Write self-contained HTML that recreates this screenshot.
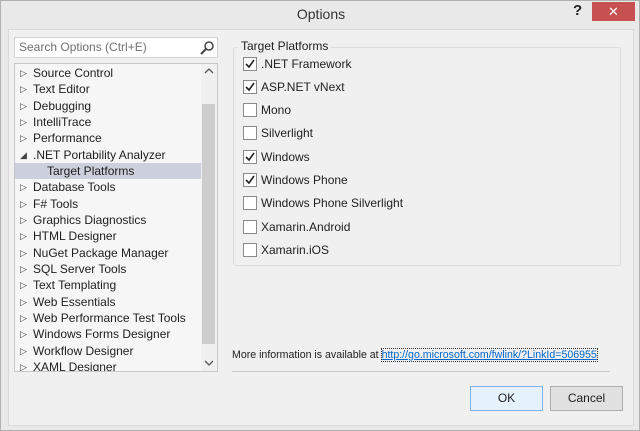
<!DOCTYPE html><html><head><style>
*{margin:0;padding:0;box-sizing:border-box}
body{width:640px;height:431px;overflow:hidden;background:#c9c9c9;font-family:"Liberation Sans",sans-serif;font-size:12px;color:#1e1e1e;position:relative}
.win{position:absolute;left:0;top:0;width:640px;height:431px;background:#e9e9e9;border:1px solid #b0b0b0}
.title{position:absolute;left:0;top:5px;width:640px;text-align:center;font-size:14px;color:#333}
.close{position:absolute;left:591px;top:1px;width:43px;height:19px;background:#c75050;color:#fff;text-align:center;font-size:13px;line-height:19px}
.help{position:absolute;left:572px;top:1px;font-size:15px;font-weight:bold;color:#222}
.inner{position:absolute;left:7px;top:28px;width:626px;height:397px;background:#f0f0f0;border:1px solid #d9d9d9}
.abs{position:absolute}
.search{left:13px;top:36px;width:204px;height:21px;background:#fff;border:1px solid #d4d4d4;color:#707070;padding:2px 4px;font-size:12px}
.tree{left:13px;top:62px;width:204px;height:309px;background:#f6f6f6;border:1px solid #c8c8c8;overflow:hidden}
.row{position:absolute;left:0;width:186px;height:16px;line-height:16px;padding-left:18px;white-space:nowrap}
.row .a{position:absolute;left:5px;top:0;font-size:9px;color:#444}
.sel{background:#ccd0dc}
.sb{position:absolute;left:186px;top:0;width:16px;height:307px;background:#f0f0f0}
.thumb{position:absolute;left:1px;top:40px;width:13px;height:240px;background:#cdcdcd}
.grp{left:232px;top:46px;width:388px;height:219px;border:1px solid #dcdcdc;border-radius:3px}
.legend{left:237px;top:38px;background:#f0f0f0;padding:0 3px}
.cb{position:absolute;left:242px;width:14px;height:14px;border:1px solid #8a8a8a;background:#fff}
.cbl{position:absolute;left:260px}
.btn{top:385px;width:73px;height:25px;background:#e1e1e1;border:1px solid #adadad;text-align:center;line-height:23px}
</style></head><body>
<div class="win">
<div class="title">Options</div>
<div class="help">?</div>
<div class="close">✕</div>
<div class="inner"></div>
<div class="abs search">Search Options (Ctrl+E)<svg style="position:absolute;right:3px;top:3px" width="14" height="14"><circle cx="9" cy="5" r="4" fill="none" stroke="#444" stroke-width="1.5"/><line x1="6" y1="8" x2="1" y2="13" stroke="#444" stroke-width="2"/></svg></div>
<div class="abs tree">
<div class="row" style="top:1px"><span class="a">▷</span>Source Control</div>
<div class="row" style="top:17px"><span class="a">▷</span>Text Editor</div>
<div class="row" style="top:34px"><span class="a">▷</span>Debugging</div>
<div class="row" style="top:50px"><span class="a">▷</span>IntelliTrace</div>
<div class="row" style="top:66px"><span class="a">▷</span>Performance</div>
<div class="row" style="top:83px"><span class="a">◢</span>.NET Portability Analyzer</div>
<div class="row sel" style="top:99px;padding-left:32px">Target Platforms</div>
<div class="row" style="top:115px"><span class="a">▷</span>Database Tools</div>
<div class="row" style="top:132px"><span class="a">▷</span>F# Tools</div>
<div class="row" style="top:148px"><span class="a">▷</span>Graphics Diagnostics</div>
<div class="row" style="top:164px"><span class="a">▷</span>HTML Designer</div>
<div class="row" style="top:181px"><span class="a">▷</span>NuGet Package Manager</div>
<div class="row" style="top:197px"><span class="a">▷</span>SQL Server Tools</div>
<div class="row" style="top:213px"><span class="a">▷</span>Text Templating</div>
<div class="row" style="top:230px"><span class="a">▷</span>Web Essentials</div>
<div class="row" style="top:246px"><span class="a">▷</span>Web Performance Test Tools</div>
<div class="row" style="top:262px"><span class="a">▷</span>Windows Forms Designer</div>
<div class="row" style="top:279px"><span class="a">▷</span>Workflow Designer</div>
<div class="row" style="top:295px"><span class="a">▷</span>XAML Designer</div>
<div class="sb"><div class="thumb"></div>
<svg style="position:absolute;left:3px;top:4px" width="10" height="6"><path d="M1 5L5 1L9 5" fill="none" stroke="#555" stroke-width="1.3"/></svg>
<svg style="position:absolute;left:3px;top:296px" width="10" height="6"><path d="M1 1L5 5L9 1" fill="none" stroke="#555" stroke-width="1.3"/></svg>
</div></div>
<div class="abs grp"></div>
<div class="abs legend">Target Platforms</div>
<div class="cb" style="top:56px"><svg width="12" height="12"><path d="M2 6L5 9L10 2" fill="none" stroke="#222" stroke-width="1.6"/></svg></div><div class="cbl" style="top:56px">.NET Framework</div>
<div class="cb" style="top:79px"><svg width="12" height="12"><path d="M2 6L5 9L10 2" fill="none" stroke="#222" stroke-width="1.6"/></svg></div><div class="cbl" style="top:79px">ASP.NET vNext</div>
<div class="cb" style="top:102px"></div><div class="cbl" style="top:102px">Mono</div>
<div class="cb" style="top:125px"></div><div class="cbl" style="top:125px">Silverlight</div>
<div class="cb" style="top:149px"><svg width="12" height="12"><path d="M2 6L5 9L10 2" fill="none" stroke="#222" stroke-width="1.6"/></svg></div><div class="cbl" style="top:149px">Windows</div>
<div class="cb" style="top:172px"><svg width="12" height="12"><path d="M2 6L5 9L10 2" fill="none" stroke="#222" stroke-width="1.6"/></svg></div><div class="cbl" style="top:172px">Windows Phone</div>
<div class="cb" style="top:195px"></div><div class="cbl" style="top:195px">Windows Phone Silverlight</div>
<div class="cb" style="top:219px"></div><div class="cbl" style="top:219px">Xamarin.Android</div>
<div class="cb" style="top:242px"></div><div class="cbl" style="top:242px">Xamarin.iOS</div>
<div class="abs" style="left:231px;top:348px;font-size:10.6px;white-space:nowrap">More information is available at <span style="color:#0066cc;text-decoration:underline;outline:1px dotted #333">http://go.microsoft.com/fwlink/?LinkId=506955</span></div>
<div class="abs" style="left:231px;top:370px;width:378px;height:1px;background:#c8c8c8"></div>
<div class="abs btn" style="left:469px;border-color:#7eb4ea;background:#e5f1fb">OK</div>
<div class="abs btn" style="left:549px">Cancel</div>
</div>
</body></html>
